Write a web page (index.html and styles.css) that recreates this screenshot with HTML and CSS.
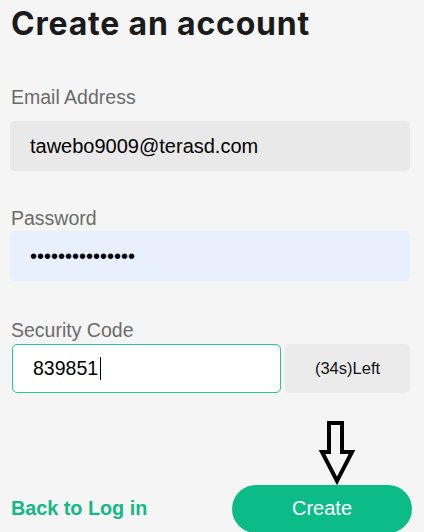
FILE: index.html
```html
<!DOCTYPE html>
<html lang="en">
<head>
<meta charset="utf-8">
<title>Create an account</title>
<link rel="stylesheet" href="styles.css">
</head>
<body>
<div class="page">
  <h1 class="title">Create an account</h1>

  <label class="label label-email" for="email">Email Address</label>
  <input class="field field-email" id="email" type="text" value="tawebo9009@terasd.com" readonly>

  <label class="label label-password" for="password">Password</label>
  <input class="field field-password" id="password" type="password" value="abcdefghijklmno" readonly>

  <label class="label label-code">Security Code</label>
  <div class="code-row">
    <div class="code-input"><span class="code-text">839851</span><span class="caret"></span></div>
    <button class="code-btn" type="button">(34s)Left</button>
  </div>

  <div class="actions">
    <a class="back-link" href="#">Back to Log in</a>
    <button class="create-btn" type="button">Create</button>
  </div>

  <svg class="arrow" width="40" height="72" viewBox="318 418 40 72" aria-hidden="true">
    <path d="M329 423 H342 V452 H352 L337 481 L322 452 H329 Z" fill="none" stroke="#000" stroke-width="4" stroke-linejoin="miter"/>
  </svg>
</div>
</body>
</html>
```

FILE: styles.css
```css
html, body {
  margin: 0;
  padding: 0;
  background: #f5f5f5;
}

body {
  font-family: "Liberation Sans", Arial, sans-serif;
}

.page {
  position: relative;
  height: 532px;
  overflow: hidden;
  padding: 0 14px 0 10px;
  box-sizing: border-box;
}

.title {
  margin: 0;
  padding-left: 1px;
  font-family: Inter, "DejaVu Sans", sans-serif;
  font-weight: 700;
  font-size: 32px;
  line-height: 48px;
  letter-spacing: 0.8px;
  color: #1b1b1b;
}

.label {
  display: block;
  padding-left: 1px;
  font-size: 19.5px;
  line-height: 24px;
  color: #6b6b6b;
}

.label-email { margin-top: 36.5px; }
.label-password { margin-top: 35px; }
.label-code { margin-top: 37.2px; }

.field {
  display: block;
  box-sizing: border-box;
  width: 100%;
  height: 50px;
  border: none;
  border-radius: 5px;
  padding: 0 0 0 20px;
  font-family: "Liberation Sans", Arial, sans-serif;
  font-size: 20px;
  color: #000;
  outline: none;
}

.field-email {
  margin-top: 12.5px;
  background: #e9e9e9;
}

.field-password {
  margin-top: 1px;
  background: #e8f0fe;
}

.code-row {
  display: flex;
  gap: 4px;
  margin-top: 1.8px;
  padding-left: 2px;
  height: 49px;
}

.code-input {
  box-sizing: border-box;
  width: 269px;
  height: 49px;
  display: flex;
  align-items: center;
  padding-left: 20px;
  background: #fff;
  border: 1px solid #20c997;
  border-radius: 5px;
  font-size: 19.5px;
  color: #000;
}

.caret {
  display: inline-block;
  width: 1px;
  height: 23px;
  margin-left: 2px;
  background: #000;
}

.code-btn {
  flex: 1;
  height: 49px;
  border: none;
  border-radius: 5px;
  background: #ebebeb;
  font-family: "Liberation Sans", Arial, sans-serif;
  font-size: 16.5px;
  color: #111;
  padding: 0;
}

.actions {
  display: flex;
  justify-content: space-between;
  align-items: center;
  margin-top: 92px;
}

.back-link {
  padding-left: 1px;
  font-weight: 700;
  font-size: 19.8px;
  color: #12b886;
  text-decoration: none;
}

.create-btn {
  width: 180px;
  height: 48px;
  margin-right: -2px;
  border: none;
  border-radius: 24px;
  background: #0bbc88;
  color: #fff;
  font-family: "Liberation Sans", Arial, sans-serif;
  font-size: 20px;
  padding: 0;
}

.arrow {
  position: absolute;
  left: 318px;
  top: 418px;
}
```
